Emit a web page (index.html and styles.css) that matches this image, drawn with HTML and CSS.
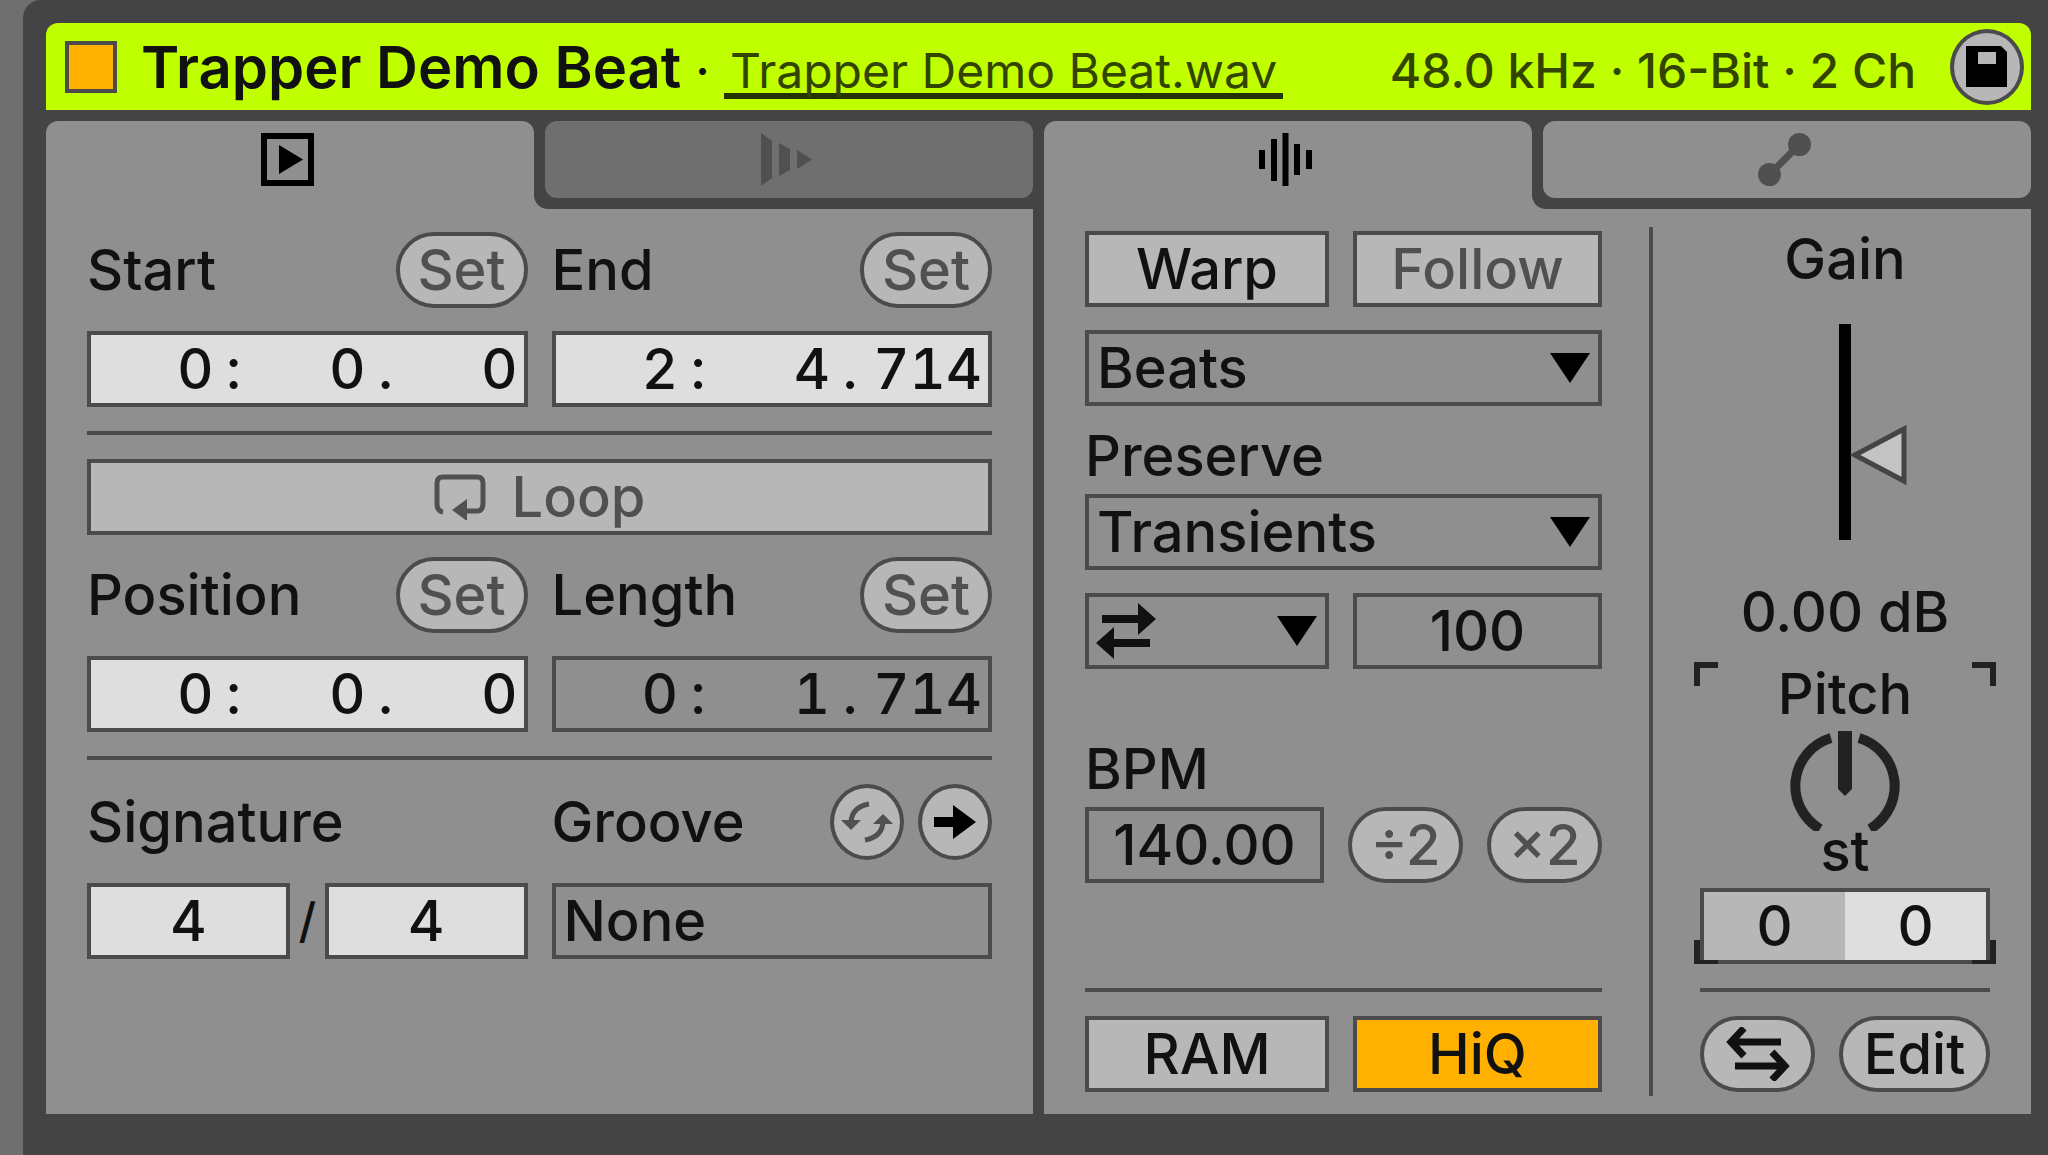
FILE: index.html
```html
<!DOCTYPE html>
<html lang="en">
<head>
    <meta charset="UTF-8">
    <meta name="viewport" content="width=device-width, initial-scale=1.0">
    <title>Trapper Demo Beat</title>
    <link rel="stylesheet" href="styles.css">
</head>
<body>

<main class="clip">
    <header class="clip-header">
        <button type="button" class="clip-color" aria-label="Clip active"></button>
        <h1>Trapper Demo Beat</h1>
        <span class="dot">·</span>
        <a href="#" class="file-name">Trapper Demo Beat.wav</a>
        <span class="file-info">48.0 kHz · 16-Bit · 2 Ch</span>
        <button type="button" class="round save" aria-label="Save default clip">
            <svg width="42" height="42" viewBox="0 0 42 42"><path d="M0 0H35L41 6V41H0Z" fill="#000"/><rect x="12" y="6" width="18" height="12" fill="#b7b7b7"/></svg>
        </button>
    </header>

    <div class="panels">
        <!-- Clip panel -->
        <section class="panel">
            <div class="tabs">
                <button type="button" class="tab active" aria-label="Clip">
                    <svg width="53" height="53" viewBox="0 0 53 53"><rect x="3" y="3" width="47" height="47" fill="none" stroke="#000" stroke-width="6"/><path d="M18 12L42 26.500L18 41Z" fill="#000"/></svg>
                </button>
                <div class="tab-slot">
                    <button type="button" class="tab dim" aria-label="Launch">
                        <svg width="53" height="53" viewBox="0 0 53 53" fill="#505050"><path d="M1 0L12 8V45L1 53Z"/><path d="M19 10L30 16V37L19 43Z"/><path d="M37 17L52 26.500L37 36Z"/></svg>
                    </button>
                </div>
            </div>

            <div class="clip-body">
                <div class="pair">
                    <div class="label-row"><span>Start</span><button type="button" class="pill set">Set</button></div>
                    <div class="label-row"><span>End</span><button type="button" class="pill set">Set</button></div>
                </div>
                <div class="pair spaced">
                    <div class="time">
                        <input type="text" value="0" aria-label="Start bars"><span>:</span>
                        <input type="text" value="0" aria-label="Start beats"><span>.</span>
                        <input type="text" value="0" aria-label="Start fraction">
                    </div>
                    <div class="time">
                        <input type="text" value="2" aria-label="End bars"><span>:</span>
                        <input type="text" value="4" aria-label="End beats"><span>.</span>
                        <input type="text" value="714" aria-label="End fraction">
                    </div>
                </div>

                <hr>

                <button type="button" class="box loop">
                    <svg width="52" height="46" viewBox="0 0 52 46" fill="none" stroke="#505050" stroke-width="5"><path d="M9 38Q3 37 3 30V9Q3 3 9 3H43Q49 3 49 9V29Q49 37 43 37H32"/><path d="M18 36L33 25V47Z" fill="#505050" stroke="none"/></svg>
                    Loop
                </button>

                <div class="pair">
                    <div class="label-row"><span>Position</span><button type="button" class="pill set">Set</button></div>
                    <div class="label-row"><span>Length</span><button type="button" class="pill set">Set</button></div>
                </div>
                <div class="pair spaced">
                    <div class="time">
                        <input type="text" value="0" aria-label="Position bars"><span>:</span>
                        <input type="text" value="0" aria-label="Position beats"><span>.</span>
                        <input type="text" value="0" aria-label="Position fraction">
                    </div>
                    <div class="time off">
                        <input type="text" value="0" aria-label="Length bars"><span>:</span>
                        <input type="text" value="1" aria-label="Length beats"><span>.</span>
                        <input type="text" value="714" aria-label="Length fraction">
                    </div>
                </div>

                <hr>

                <div class="pair">
                    <div class="label-row"><span>Signature</span></div>
                    <div class="label-row">
                        <label for="groove">Groove</label>
                        <div class="round-group">
                            <button type="button" class="round" aria-label="Hot-swap groove">
                                <svg width="52" height="44" viewBox="0 0 52 44" fill="none" stroke="#505050" stroke-width="5"><path d="M10 22Q11 7 28 4"/><path d="M42 22Q41 37 24 40"/><path d="M0 20H20L10 30Z" fill="#505050" stroke="none"/><path d="M32 24H52L42 14Z" fill="#505050" stroke="none"/></svg>
                            </button>
                            <button type="button" class="round" aria-label="Commit groove">
                                <svg width="42" height="34" viewBox="0 0 42 34"><path d="M0 12H19V0L42 17L19 34V22H0Z" fill="#000"/></svg>
                            </button>
                        </div>
                    </div>
                </div>
                <div class="pair spaced">
                    <div class="signature">
                        <input type="text" class="box light" value="4" aria-label="Signature numerator">
                        <span>/</span>
                        <input type="text" class="box light" value="4" aria-label="Signature denominator">
                    </div>
                    <select id="groove" class="box">
                        <option>None</option>
                    </select>
                </div>
            </div>
        </section>

        <!-- Audio panel -->
        <section class="panel">
            <div class="tabs">
                <button type="button" class="tab active" aria-label="Audio">
                    <svg width="53" height="53" viewBox="0 0 53 53" stroke="#000" stroke-width="6"><path d="M3 17V36M15 6V48M26.500 0V53M38 11V42M50 17V36"/></svg>
                </button>
                <div class="tab-slot">
                    <button type="button" class="tab" aria-label="Envelopes">
                        <svg width="53" height="53" viewBox="0 0 53 53" fill="#505050"><circle cx="41.500" cy="11.500" r="11.500"/><circle cx="11.500" cy="41.500" r="11.500"/><path d="M11.500 41.500L41.500 11.500" stroke="#505050" stroke-width="7"/></svg>
                    </button>
                </div>
            </div>

            <div class="audio-body">
                <div class="warp">
                    <div class="halves">
                        <button type="button" class="box">Warp</button>
                        <button type="button" class="box muted">Follow</button>
                    </div>
                    <select class="box arrow spaced" aria-label="Warp mode">
                        <option>Beats</option>
                    </select>
                    <label for="preserve" class="preserve-label">Preserve</label>
                    <select id="preserve" class="box arrow">
                        <option>Transients</option>
                    </select>
                    <div class="halves spaced">
                        <select class="box arrow loop-mode" aria-label="Transient loop mode">
                            <option aria-label="Back and forth"></option>
                        </select>
                        <input type="text" class="box" value="100" aria-label="Transient envelope">
                    </div>
                    <label for="bpm" class="bpm-label">BPM</label>
                    <div class="bpm-row">
                        <input type="text" id="bpm" class="box" value="140.00">
                        <button type="button" class="pill muted">÷2</button>
                        <button type="button" class="pill muted">×2</button>
                    </div>
                    <div class="footer">
                        <hr>
                        <div class="halves">
                            <button type="button" class="box">RAM</button>
                            <button type="button" class="box on">HiQ</button>
                        </div>
                    </div>
                </div>

                <div class="separator"></div>

                <div class="mix">
                    <label for="gain">Gain</label>
                    <input type="range" id="gain" class="gain" min="-35" max="65" value="0">
                    <output class="gain-value" for="gain">0.00 dB</output>

                    <div class="pitch">
                        <i class="corner tl"></i><i class="corner tr"></i>
                        <span>Pitch</span>
                        <svg class="knob" width="110" height="100" viewBox="0 0 110 100" fill="none" stroke="#222"><path d="M41 7A50 50 0 0 0 30 98" stroke-width="10"/><path d="M69 7A50 50 0 0 1 80 98" stroke-width="10"/><path d="M48 0H62V58L55 65L48 58Z" fill="#222" stroke="none"/></svg>
                        <span class="unit">st</span>
                        <div class="pitch-values">
                            <input type="text" value="0" aria-label="Semitones">
                            <input type="text" value="0" aria-label="Cents">
                        </div>
                        <i class="corner bl"></i><i class="corner br"></i>
                    </div>

                    <div class="footer">
                        <hr>
                        <div class="edit-row">
                            <button type="button" class="pill" aria-label="Reverse">
                                <svg width="64" height="54" viewBox="0 0 64 54" fill="none" stroke="#111" stroke-width="7"><path d="M4 15H55M18 1L5 15L18 29"/><path d="M9 39H60M46 25L59 39L46 53"/></svg>
                            </button>
                            <button type="button" class="pill">Edit</button>
                        </div>
                    </div>
                </div>
            </div>
        </section>
    </div>
</main>

</body>
</html>
```

FILE: styles.css
```css
* {
    box-sizing: border-box;
}
body {
    margin: 0;
    background-color: #6f6f6f;
    color: #111;
    font-family: Inter, Roboto, sans-serif;
    font-size: 56px;
    font-weight: 500;
    line-height: 56px;
}
button, input, select {
    margin: 0;
    padding: 0;
    border: 0;
    border-radius: 0;
    background-color: transparent;
    color: inherit;
    font: inherit;
    appearance: none;
}
button {
    display: flex;
    justify-content: center;
    align-items: center;
    cursor: pointer;
}
input {
    min-width: 0;
    text-align: center;
}
svg {
    flex: none;
}
hr {
    width: 100%;
    height: 4px;
    margin: 24px 0;
    border: 0;
    background-color: #4b4b4b;
}
.clip {
    display: flex;
    flex-direction: column;
    min-height: 100vh;
    margin-left: 23px;
    padding: 23px 17px 41px 23px;
    border-top-left-radius: 18px;
    background-color: #444;
}

/* Title bar */
.clip-header {
    display: flex;
    align-items: baseline;
    height: 87px;
    padding: 16px 7px 0 19px;
    border-radius: 12px 12px 0 0;
    background-color: #bfff00;
}
.clip-color {
    align-self: flex-start;
    width: 52px;
    height: 52px;
    margin: 2px 24px 0 0;
    border: 4px solid #4b4b4b;
    background-color: #ffb000;
}
h1 {
    margin: 0;
    font-size: 58px;
    font-weight: 600;
    white-space: nowrap;
}
.dot {
    margin: 0 14px;
    font-size: 48px;
}
.file-name {
    height: 52px;
    padding: 0 6px;
    border-bottom: 6px solid #253300;
    color: #324400;
    font-size: 48px;
    font-weight: 400;
    line-height: 48px;
    text-decoration: none;
    white-space: nowrap;
}
.file-info {
    margin-left: auto;
    color: #324400;
    font-size: 48px;
    white-space: nowrap;
}
.round {
    width: 74px;
    height: 76px;
    border: 4px solid #4b4b4b;
    border-radius: 50%;
    background-color: #b7b7b7;
}
.save {
    align-self: flex-start;
    margin: -10px 0 0 34px;
}

/* Panels and tabs */
.panels {
    display: grid;
    flex: 1;
    grid-template-columns: 1fr 1fr;
    gap: 11px;
    margin-top: 11px;
}
.panel {
    display: flex;
    flex-direction: column;
    min-width: 0;
    background-color: #8f8f8f;
}
.tabs {
    display: flex;
    background: linear-gradient(#444 50%, #8f8f8f 50%);
}
.tab {
    flex: 1;
    height: 77px;
    border-radius: 12px;
    background-color: #8f8f8f;
}
.tab svg {
    margin-right: 5px;
}
.tab.active {
    height: auto;
    padding-bottom: 11px;
    border-radius: 12px 12px 0 0;
}
.tabs > .tab.active {
    height: 77px;
    padding-bottom: 0;
}
.tab.dim {
    background-color: #6f6f6f;
}
.tab-slot {
    display: flex;
    flex: 1;
    padding: 0 0 11px 11px;
    border-bottom-left-radius: 14px;
    background-color: #444;
}

/* Shared controls */
.box {
    width: 100%;
    height: 76px;
    border: 4px solid #4b4b4b;
}
button.box, .pill {
    background-color: #b7b7b7;
}
.pill {
    height: 76px;
    border: 4px solid #4b4b4b;
    border-radius: 38px;
}
.set, .muted, .loop {
    color: #505050;
}
button.on {
    background-color: #ffb000;
}
.light {
    background-color: #dedede;
}
select.box {
    padding-left: 8px;
}
.arrow {
    background-image: url("data:image/svg+xml,%3Csvg xmlns='http://www.w3.org/2000/svg' width='40' height='30'%3E%3Cpath d='M0 0H40L20 30Z'/%3E%3C/svg%3E");
    background-repeat: no-repeat;
    background-position: right 8px center;
}
.spaced {
    margin-top: 23px;
}

/* Clip panel */
.clip-body {
    padding: 23px 41px;
}
.pair {
    display: grid;
    grid-template-columns: 1fr 1fr;
    gap: 24px;
}
.label-row {
    display: flex;
    justify-content: space-between;
    align-items: center;
    height: 76px;
}
.set {
    width: 132px;
}
.time {
    display: flex;
    align-items: center;
    height: 76px;
    padding-right: 6px;
    border: 4px solid #4b4b4b;
    background-color: #dedede;
    font-variant-numeric: tabular-nums;
}
.time.off {
    background-color: transparent;
}
.time input {
    width: 112px;
    text-align: right;
}
.time input:first-child {
    flex: 1;
}
.time span {
    width: 40px;
    text-align: center;
}
.loop {
    gap: 26px;
    margin-bottom: 22px;
}
.round-group {
    display: flex;
    gap: 14px;
}
.signature {
    display: grid;
    grid-template-columns: 1fr 35px 1fr;
    align-items: center;
    text-align: center;
}
.signature span {
    font-size: 48px;
}

/* Audio panel */
.audio-body {
    display: grid;
    flex: 1;
    grid-template-columns: 1fr 4px 290px;
    column-gap: 47px;
    padding: 18px 41px;
}
.warp, .mix {
    display: flex;
    flex-direction: column;
    padding: 4px 0;
}
.halves {
    display: grid;
    grid-template-columns: 243fr 248fr;
    gap: 24px;
}
.preserve-label, .bpm-label {
    margin-top: 12px;
    line-height: 76px;
}
.bpm-label {
    margin-top: 62px;
}
.loop-mode {
    background-image: url("data:image/svg+xml,%3Csvg xmlns='http://www.w3.org/2000/svg' width='40' height='30'%3E%3Cpath d='M0 0H40L20 30Z'/%3E%3C/svg%3E"), url("data:image/svg+xml,%3Csvg xmlns='http://www.w3.org/2000/svg' width='60' height='56' fill='%23111'%3E%3Cpath d='M6 12H42V0L60 16L42 32V20H6Z'/%3E%3Cpath d='M54 36H18V24L0 40L18 56V44H54Z'/%3E%3C/svg%3E");
    background-position: right 8px center, 7px center;
}
.bpm-row {
    display: grid;
    grid-template-columns: 1fr 115px 115px;
    gap: 24px;
}
.footer {
    margin-top: auto;
}
.footer hr {
    margin-top: 0;
}
.separator {
    background-color: #4b4b4b;
}

/* Gain and pitch */
.mix {
    align-items: center;
}
.gain {
    width: 126px;
    height: 216px;
    margin-top: 37px;
    background: linear-gradient(#000, #000) center / 12px 100% no-repeat;
    direction: rtl;
    writing-mode: vertical-lr;
}
.gain::-webkit-slider-thumb {
    width: 126px;
    height: 62px;
    background: url("data:image/svg+xml,%3Csvg xmlns='http://www.w3.org/2000/svg' width='58' height='62'%3E%3Cpath d='M5 31L54 5V57Z' fill='%23c3c3c3' stroke='%23444' stroke-width='5'/%3E%3C/svg%3E") right center no-repeat;
    appearance: none;
}
.gain-value {
    margin-top: 44px;
    white-space: nowrap;
}
.pitch {
    position: relative;
    display: flex;
    flex-direction: column;
    align-items: center;
    width: 302px;
    margin-top: 22px;
    padding: 4px 6px 0;
}
.knob {
    margin-top: 9px;
}
.unit {
    line-height: 40px;
}
.pitch-values {
    display: flex;
    width: 100%;
    height: 76px;
    margin-top: 17px;
    border: 4px solid #4b4b4b;
    background-color: #dedede;
}
.pitch-values input {
    flex: 1;
}
.pitch-values input:first-child {
    background-color: #b7b7b7;
}
.corner {
    position: absolute;
    width: 24px;
    height: 24px;
    border: 0 solid #222;
}
.tl {
    top: 0;
    left: 0;
    border-width: 6px 0 0 6px;
}
.tr {
    top: 0;
    right: 0;
    border-width: 6px 6px 0 0;
}
.bl {
    bottom: 0;
    left: 0;
    border-width: 0 0 4px 6px;
}
.br {
    right: 0;
    bottom: 0;
    border-width: 0 6px 4px 0;
}
.mix .footer {
    width: 100%;
}
.edit-row {
    display: grid;
    grid-template-columns: 115px 1fr;
    gap: 24px;
}
```
